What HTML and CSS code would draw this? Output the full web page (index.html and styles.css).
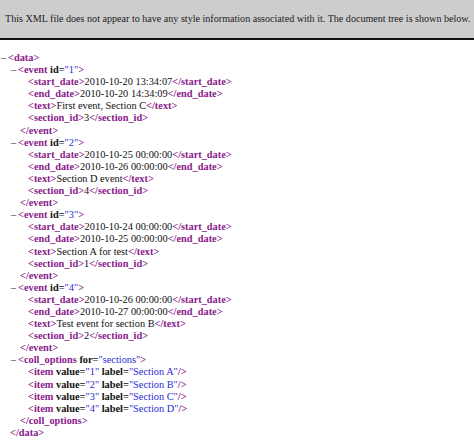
FILE: index.html
```html
<!DOCTYPE html>
<html>
<head>
  <meta charset="UTF-8">
  <title>XML</title>
  <link rel="stylesheet" href="styles.css">
</head>
<body>

<div class="header">This XML file does not appear to have any style information associated with it. The document tree is shown below.</div>

<div class="tree">
  <div class="line"><span class="exp">–</span><span class="tag">&lt;data&gt;</span></div>
  <div class="kids">
    <div class="line"><span class="exp">–</span><span class="tag">&lt;event</span> <span class="an">id=</span><span class="av">"1"</span><span class="tag">&gt;</span></div>
    <div class="kids">
      <div class="line"><span class="tag">&lt;start_date&gt;</span>2010-10-20 13:34:07<span class="tag">&lt;/start_date&gt;</span></div>
      <div class="line"><span class="tag">&lt;end_date&gt;</span>2010-10-20 14:34:09<span class="tag">&lt;/end_date&gt;</span></div>
      <div class="line"><span class="tag">&lt;text&gt;</span>First event, Section C<span class="tag">&lt;/text&gt;</span></div>
      <div class="line"><span class="tag">&lt;section_id&gt;</span>3<span class="tag">&lt;/section_id&gt;</span></div>
    </div>
    <div class="line close"><span class="tag">&lt;/event&gt;</span></div>

    <div class="line"><span class="exp">–</span><span class="tag">&lt;event</span> <span class="an">id=</span><span class="av">"2"</span><span class="tag">&gt;</span></div>
    <div class="kids">
      <div class="line"><span class="tag">&lt;start_date&gt;</span>2010-10-25 00:00:00<span class="tag">&lt;/start_date&gt;</span></div>
      <div class="line"><span class="tag">&lt;end_date&gt;</span>2010-10-26 00:00:00<span class="tag">&lt;/end_date&gt;</span></div>
      <div class="line"><span class="tag">&lt;text&gt;</span>Section D event<span class="tag">&lt;/text&gt;</span></div>
      <div class="line"><span class="tag">&lt;section_id&gt;</span>4<span class="tag">&lt;/section_id&gt;</span></div>
    </div>
    <div class="line close"><span class="tag">&lt;/event&gt;</span></div>

    <div class="line"><span class="exp">–</span><span class="tag">&lt;event</span> <span class="an">id=</span><span class="av">"3"</span><span class="tag">&gt;</span></div>
    <div class="kids">
      <div class="line"><span class="tag">&lt;start_date&gt;</span>2010-10-24 00:00:00<span class="tag">&lt;/start_date&gt;</span></div>
      <div class="line"><span class="tag">&lt;end_date&gt;</span>2010-10-25 00:00:00<span class="tag">&lt;/end_date&gt;</span></div>
      <div class="line"><span class="tag">&lt;text&gt;</span>Section A for test<span class="tag">&lt;/text&gt;</span></div>
      <div class="line"><span class="tag">&lt;section_id&gt;</span>1<span class="tag">&lt;/section_id&gt;</span></div>
    </div>
    <div class="line close"><span class="tag">&lt;/event&gt;</span></div>

    <div class="line"><span class="exp">–</span><span class="tag">&lt;event</span> <span class="an">id=</span><span class="av">"4"</span><span class="tag">&gt;</span></div>
    <div class="kids">
      <div class="line"><span class="tag">&lt;start_date&gt;</span>2010-10-26 00:00:00<span class="tag">&lt;/start_date&gt;</span></div>
      <div class="line"><span class="tag">&lt;end_date&gt;</span>2010-10-27 00:00:00<span class="tag">&lt;/end_date&gt;</span></div>
      <div class="line"><span class="tag">&lt;text&gt;</span>Test event for section B<span class="tag">&lt;/text&gt;</span></div>
      <div class="line"><span class="tag">&lt;section_id&gt;</span>2<span class="tag">&lt;/section_id&gt;</span></div>
    </div>
    <div class="line close"><span class="tag">&lt;/event&gt;</span></div>

    <div class="line"><span class="exp">–</span><span class="tag">&lt;coll_options</span> <span class="an">for=</span><span class="av">"sections"</span><span class="tag">&gt;</span></div>
    <div class="kids">
      <div class="line"><span class="tag">&lt;item</span> <span class="an">value=</span><span class="av">"1"</span> <span class="an">label=</span><span class="av">"Section A"</span><span class="tag">/&gt;</span></div>
      <div class="line"><span class="tag">&lt;item</span> <span class="an">value=</span><span class="av">"2"</span> <span class="an">label=</span><span class="av">"Section B"</span><span class="tag">/&gt;</span></div>
      <div class="line"><span class="tag">&lt;item</span> <span class="an">value=</span><span class="av">"3"</span> <span class="an">label=</span><span class="av">"Section C"</span><span class="tag">/&gt;</span></div>
      <div class="line"><span class="tag">&lt;item</span> <span class="an">value=</span><span class="av">"4"</span> <span class="an">label=</span><span class="av">"Section D"</span><span class="tag">/&gt;</span></div>
    </div>
    <div class="line close"><span class="tag">&lt;/coll_options&gt;</span></div>
  </div>
  <div class="line close"><span class="tag">&lt;/data&gt;</span></div>
</div>

</body>
</html>
```

FILE: styles.css
```css
body { margin: 0; font-family: "Liberation Serif", "Times New Roman", serif; font-size: 10px; color: #111; background: #fff; }
.header { background: #cdcdcd; border-bottom: 2px solid #111; padding: 13px 5px; font-size: 10.1px; line-height: 12px; color: #222; white-space: nowrap; }
.tree { padding: 12px 0 0 8px; font-size: 10.35px; }
.line { line-height: 12.1px; white-space: nowrap; }
.close { margin-left: 2px; }
.kids { padding-left: 10px; }
.exp { display: inline-block; width: 7px; margin-left: -7px; color: #333; }
.tag { color: #8a1a8a; font-weight: bold; }
.an { color: #111; font-weight: bold; }
.av { color: #2b2bd6; }
```
